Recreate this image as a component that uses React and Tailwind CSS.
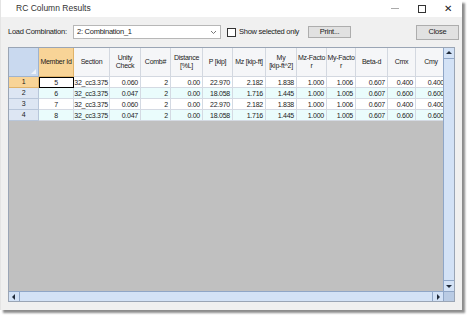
import React from "react";

const cols = [
  { key: "mid", label: ["Member Id"], w: "w-[35px]", align: "center" },
  { key: "sec", label: ["Section"], w: "w-[36px]", align: "clip" },
  { key: "uc", label: ["Unity", "Check"], w: "w-[31px]" },
  { key: "comb", label: ["Comb#"], w: "w-[30px]" },
  { key: "dist", label: ["Distance", "[%L]"], w: "w-[32px]" },
  { key: "p", label: ["P [kip]"], w: "w-[30px]" },
  { key: "mz", label: ["Mz [kip-ft]"], w: "w-[33px]" },
  { key: "my", label: ["My", "[kip-ft^2]"], w: "w-[31px]" },
  { key: "mzf", label: ["Mz-Facto", "r"], w: "w-[30px]" },
  { key: "myf", label: ["My-Facto", "r"], w: "w-[29px]" },
  { key: "beta", label: ["Beta-d"], w: "w-[32px]" },
  { key: "cmx", label: ["Cmx"], w: "w-[28px]" },
  { key: "cmy", label: ["Cmy"], w: "w-[31px]" },
];

const rows = [
  { mid: "5", sec: "32_cc3.375", uc: "0.060", comb: "2", dist: "0.00", p: "22.970", mz: "2.182", my: "1.838", mzf: "1.000", myf: "1.006", beta: "0.607", cmx: "0.400", cmy: "0.400" },
  { mid: "6", sec: "32_cc3.375", uc: "0.047", comb: "2", dist: "0.00", p: "18.058", mz: "1.716", my: "1.445", mzf: "1.000", myf: "1.005", beta: "0.607", cmx: "0.600", cmy: "0.600" },
  { mid: "7", sec: "32_cc3.375", uc: "0.060", comb: "2", dist: "0.00", p: "22.970", mz: "2.182", my: "1.838", mzf: "1.000", myf: "1.006", beta: "0.607", cmx: "0.400", cmy: "0.400" },
  { mid: "8", sec: "32_cc3.375", uc: "0.047", comb: "2", dist: "0.00", p: "18.058", mz: "1.716", my: "1.445", mzf: "1.000", myf: "1.005", beta: "0.607", cmx: "0.600", cmy: "0.600" },
];

function Arrow({ dir }) {
  const pts = {
    up: "1,5 4,2 7,5",
    down: "1,3 4,6 7,3",
    left: "5,1 2,4 5,7",
    right: "3,1 6,4 3,7",
  }[dir];
  return (
    <svg width="8" height="8" viewBox="0 0 8 8">
      <polygon points={pts} fill="#1f2a3a" />
    </svg>
  );
}

export default function App() {
  return (
    <div className="w-[474px] h-[320px] bg-white font-['Liberation_Sans',Arial,sans-serif] text-[#1b1b1b] tracking-[-0.25px]">
      <div className="w-[462px] h-[310px] flex flex-col bg-[#f0f0f0] border-l border-[#e4e4e4] shadow-[3px_3px_2px_rgba(0,0,0,0.45)]">
        {/* Title bar */}
        <div className="h-[17px] bg-white flex items-center pl-[15px] pr-[10px]">
          <span className="text-[8.5px] text-[#333] tracking-normal">RC Column Results</span>
          <div className="ml-auto flex items-center text-[#222]">
            <span className="w-[8px] h-px bg-[#aaa]" />
            <span className="ml-[19px] w-[8px] h-[8px] border border-[#333]" />
            <span className="ml-[18px] text-[10px] leading-none">✕</span>
          </div>
        </div>

        {/* Toolbar */}
        <div className="flex items-center h-[16px] mt-[7px] pl-[7px] pr-[3px] text-[7.5px] whitespace-nowrap">
          <span className="w-[65px]">Load Combination:</span>
          <div className="w-[148px] h-[14px] bg-white border border-[#b7b7b7] flex items-center pl-[3px] pr-[3px]">
            <span>2: Combination_1</span>
            <svg className="ml-auto" width="7" height="5" viewBox="0 0 7 5">
              <polyline points="1,1 3.5,3.5 6,1" fill="none" stroke="#666" strokeWidth="0.9" />
            </svg>
          </div>
          <span className="ml-[6px] w-[9px] h-[9px] bg-white border border-[#333]" />
          <span className="ml-[3px]">Show selected only</span>
          <button className="ml-[9px] w-[43px] h-[12px] bg-[#e1e1e1] border border-[#adadad] text-[7.5px] leading-none">Print...</button>
          <button className="ml-auto w-[43px] h-[15px] bg-[#e1e1e1] border border-[#adadad] text-[7.5px] leading-none">Close</button>
        </div>

        {/* Grid */}
        <div className="mx-[7px] mt-[7px] h-[255px] border border-[#9aa5b5] flex flex-col bg-[#c0c0c0] overflow-hidden">
          <div className="flex flex-1 min-h-0">
            <div className="flex-1 min-w-0 overflow-hidden text-[7px]">
              {/* Header row */}
              <div className="flex h-[29px]">
                <div className="w-[30px] shrink-0 bg-[#c9d9ef] border-r border-b border-[#9eb3cf] flex items-end justify-end p-[2px]">
                  <svg width="5" height="5" viewBox="0 0 5 5">
                    <polygon points="5,0 5,5 0,5" fill="#eef3fa" />
                  </svg>
                </div>
                {cols.map((c) => (
                  <div
                    key={c.key}
                    className={`${c.w} shrink-0 border-r border-b flex flex-col items-center justify-center leading-[8px] text-center whitespace-nowrap overflow-hidden ${
                      c.key === "mid"
                        ? "bg-[#f8d497] border-[#e0b36a]"
                        : "bg-[#f5f6f8] border-[#d3d8e0]"
                    }`}
                  >
                    {c.label.map((l) => (
                      <span key={l}>{l}</span>
                    ))}
                  </div>
                ))}
              </div>
              {/* Data rows */}
              {rows.map((r, i) => (
                <div key={i} className="flex h-[11px]">
                  <div
                    className={`w-[30px] shrink-0 border-r border-b flex items-center justify-center ${
                      i === 0 ? "bg-[#f8d497] border-[#e0b36a]" : "bg-[#dde6f3] border-[#b8c6da]"
                    }`}
                  >
                    {i + 1}
                  </div>
                  {cols.map((c) => {
                    const sel = i === 0 && c.key === "mid";
                    return (
                      <div
                        key={c.key}
                        className={`${c.w} shrink-0 border-r border-b border-[#d4dae3] flex items-center whitespace-nowrap overflow-hidden leading-none ${
                          sel
                            ? "bg-white outline outline-[1.5px] outline-black -outline-offset-[1.5px]"
                            : i % 2 === 1
                            ? "bg-[#eafcfc]"
                            : "bg-white"
                        } ${
                          c.align === "center"
                            ? "justify-center"
                            : c.align === "clip"
                            ? "justify-end pr-[1px]"
                            : "justify-end pr-[2px]"
                        }`}
                      >
                        {r[c.key]}
                      </div>
                    );
                  })}
                </div>
              ))}
            </div>
            {/* Vertical scrollbar */}
            <div className="w-[11px] shrink-0 bg-[#d3e2f6] border-l border-[#8fa6c7] flex flex-col items-center justify-between">
              <div className="w-full h-[11px] flex items-center justify-center border-b border-[#8fa6c7]">
                <Arrow dir="up" />
              </div>
              <div className="w-full h-[11px] flex items-center justify-center border-t border-[#8fa6c7]">
                <Arrow dir="down" />
              </div>
            </div>
          </div>
          {/* Horizontal scrollbar */}
          <div className="h-[10px] flex shrink-0 border-t border-[#8fa6c7]">
            <div className="flex-1 bg-[#d3e2f6] flex items-center justify-between">
              <div className="w-[11px] h-full flex items-center justify-center border-r border-[#8fa6c7]">
                <Arrow dir="left" />
              </div>
              <div className="w-[11px] h-full flex items-center justify-center border-l border-[#8fa6c7]">
                <Arrow dir="right" />
              </div>
            </div>
            <div className="w-[11px] bg-[#b9cbe4] border-l border-[#8fa6c7]" />
          </div>
        </div>
      </div>
    </div>
  );
}
